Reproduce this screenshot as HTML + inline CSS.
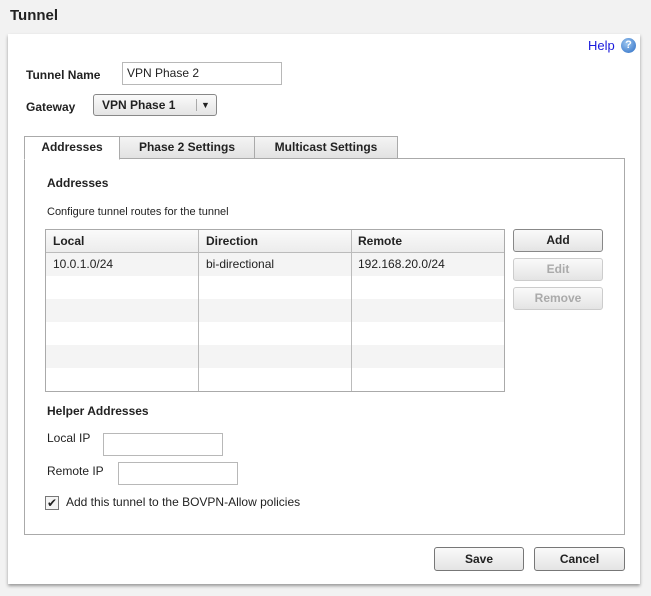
<!DOCTYPE html>
<html><head><style>
*{box-sizing:border-box;margin:0;padding:0}
body{width:651px;height:596px;background:#f2f2f2;font-family:"Liberation Sans",sans-serif;font-size:11px;color:#222;position:relative;overflow:hidden}
.a{position:absolute}
.b{font-weight:bold}
.panel{left:8px;top:34px;width:632px;height:550px;background:#fff;box-shadow:0 2px 3px #999}
.inp{border:1px solid #b8b8b8;background:#fff}
.btn{border:1px solid #888;border-radius:3px;background:linear-gradient(#fafafa,#e4e4e4);text-align:center;font-weight:bold;font-size:12px;line-height:20px}
.dis{border-color:#ccc;color:#aaa}
.tab{top:136px;height:23px;border:1px solid #aaa;background:linear-gradient(#f4f4f4,#e2e2e2);font-weight:bold;font-size:12px;text-align:center;line-height:21px}
.row{left:46px;width:458px;height:23px}
</style></head><body>
<div class="a b" style="left:10px;top:7px;font-size:15px">Tunnel</div>
<div class="a panel"></div>
<div class="a" style="left:588px;top:38px;font-size:13px;color:#1a1adc">Help</div>
<div class="a" style="left:621px;top:38px;width:15px;height:15px;border-radius:50%;background:radial-gradient(circle at 40% 35%,#9cc6f0,#2b6cc4);color:#fff;font-size:11px;font-weight:bold;text-align:center;line-height:15px">?</div>
<div class="a b" style="left:26px;top:68px;font-size:12px">Tunnel Name</div>
<div class="a inp" style="left:122px;top:62px;width:160px;height:23px;padding:3px 4px;font-size:12px">VPN Phase 2</div>
<div class="a b" style="left:26px;top:100px;font-size:12px">Gateway</div>
<div class="a btn" style="left:93px;top:94px;width:124px;height:22px;text-align:left;padding-left:8px">VPN Phase 1<span class="a" style="left:102px;top:4px;height:12px;border-left:1px solid #aaa"></span><span class="a" style="left:107px;top:0;font-size:9px">▼</span></div>
<div class="a" style="left:24px;top:158px;width:601px;height:377px;border:1px solid #aaa"></div>
<div class="a tab" style="left:24px;width:96px;background:#fff;border-bottom-color:#fff;height:24px">Addresses</div>
<div class="a tab" style="left:119px;width:136px">Phase 2 Settings</div>
<div class="a tab" style="left:254px;width:144px">Multicast Settings</div>
<div class="a b" style="left:47px;top:176px;font-size:12px">Addresses</div>
<div class="a" style="left:47px;top:206px;font-size:11px">Configure tunnel routes for the tunnel</div>
<div class="a" style="left:45px;top:229px;width:460px;height:163px;border:1px solid #aaa"></div>
<div class="a row b" style="top:230px;background:linear-gradient(#fafafa,#ececec);border-bottom:1px solid #bbb;font-size:12px;line-height:22px"><span class="a" style="left:7px">Local</span><span class="a" style="left:160px">Direction</span><span class="a" style="left:312px">Remote</span></div>
<div class="a row" style="top:253px;background:#f4f4f4;line-height:22px;font-size:12px"><span class="a" style="left:7px">10.0.1.0/24</span><span class="a" style="left:160px">bi-directional</span><span class="a" style="left:312px">192.168.20.0/24</span></div>
<div class="a row" style="top:299px;background:#f4f4f4"></div>
<div class="a row" style="top:345px;background:#f4f4f4"></div>
<div class="a" style="left:198px;top:230px;height:161px;border-left:1px solid #bbb"></div>
<div class="a" style="left:351px;top:230px;height:161px;border-left:1px solid #bbb"></div>
<div class="a btn" style="left:513px;top:229px;width:90px;height:23px">Add</div>
<div class="a btn dis" style="left:513px;top:258px;width:90px;height:23px">Edit</div>
<div class="a btn dis" style="left:513px;top:287px;width:90px;height:23px">Remove</div>
<div class="a b" style="left:47px;top:404px;font-size:12px">Helper Addresses</div>
<div class="a" style="left:47px;top:431px;font-size:12px">Local IP</div>
<div class="a inp" style="left:103px;top:433px;width:120px;height:23px"></div>
<div class="a" style="left:47px;top:464px;font-size:12px">Remote IP</div>
<div class="a inp" style="left:118px;top:462px;width:120px;height:23px"></div>
<div class="a" style="left:45px;top:496px;width:14px;height:14px;border:1px solid #777;background:#f4f4f4;font-size:12px;line-height:12px;text-align:center">✔</div>
<div class="a" style="left:66px;top:495px;font-size:12px">Add this tunnel to the BOVPN-Allow policies</div>
<div class="a btn" style="left:434px;top:547px;width:90px;height:24px;line-height:22px;border-color:#777">Save</div>
<div class="a btn" style="left:534px;top:547px;width:91px;height:24px;line-height:22px;border-color:#777">Cancel</div>
</body></html>
